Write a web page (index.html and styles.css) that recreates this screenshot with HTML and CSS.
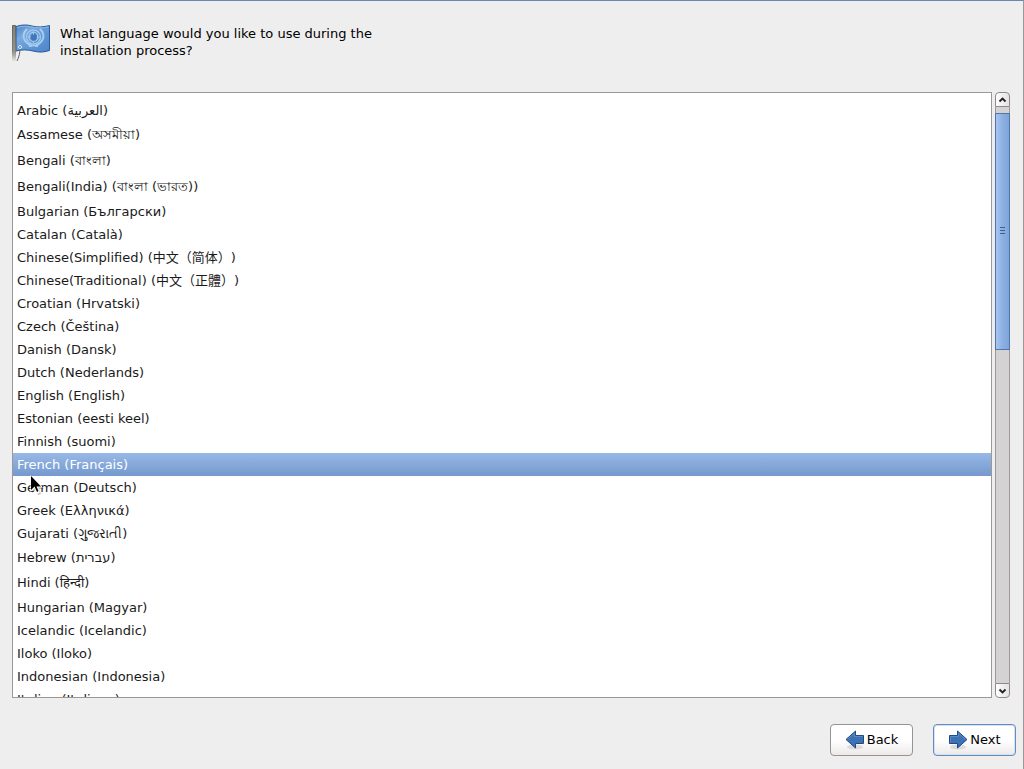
FILE: index.html
```html
<!DOCTYPE html>
<html lang="en">
<head>
    <meta charset="UTF-8">
    <meta name="viewport" content="width=device-width, initial-scale=1.0">
    <title>Installer - Language</title>
    <link rel="stylesheet" href="styles.css">
</head>
<body>
    <form class="installer">
        <header class="header">
            <svg class="flag" width="40" height="40" viewBox="0 0 40 40" aria-hidden="true">
                <defs>
                    <linearGradient id="cloth" x1="0" y1="0" x2="1" y2="1">
                        <stop offset="0" stop-color="#4a83c8"/>
                        <stop offset="0.3" stop-color="#7aaade"/>
                        <stop offset="0.65" stop-color="#5b93d3"/>
                        <stop offset="1" stop-color="#4e86c8"/>
                    </linearGradient>
                    <linearGradient id="pole" x1="0" y1="0" x2="0" y2="1">
                        <stop offset="0" stop-color="#60625c"/>
                        <stop offset="0.7" stop-color="#7c7e77"/>
                        <stop offset="1" stop-color="#888a85" stop-opacity="0"/>
                    </linearGradient>
                </defs>
                <path d="M4 2.500C10 .5 15 .5 20 2s12 1 17.500-.5v25C31 28.500 27 28.500 21 27S10 25.500 4 27z" fill="url(#cloth)" stroke="#2c5a9c"/>
                <path d="M5 3.500C10 2 15 2 20 3s11 1 16.500 0" fill="none" stroke="#8db5e4"/>
                <g fill="none" stroke="#a9cdf0">
                    <circle cx="21.500" cy="13" r="7" stroke-width="1.200"/>
                    <circle cx="21.500" cy="13" r="4.500" fill="#6ca0da" stroke-width="1.200"/>
                    <path d="M20 10l3-1 2 3-1 4-3 1-3-3z" fill="#3f78b9" stroke="none"/>
                    <path d="M21.500 7v4M16 13h3M25 13h3M21.500 17v3" stroke-width=".8"/>
                    <path d="M15 5c-6 6-4 13 5 17M28 5c6 6 4 13-5 17" stroke-width="2"/>
                    <path d="M17 22.500c3-1.500 6-1.500 9 0" stroke-width="1.500"/>
                </g>
                <rect x="0" y="1" width="4" height="37" rx="1" fill="url(#pole)"/>
                <path d="M2 2v28" stroke="#a5a79f"/>
                <path d="M8 24c0 5-1 9-3 13" fill="none" stroke="#666"/>
                <circle cx="8" cy="23" r="1.500" fill="#5588c6" stroke="#e5edf5"/>
            </svg>
            <h1 class="question" id="question">What language would you like to use during the installation process?</h1>
        </header>

        <main class="picker">
            <div class="viewport">
                <div class="languages" role="radiogroup" aria-labelledby="question">
                    <label class="language"><input type="radio" name="lang">Afrikaans (Afrikaans)</label>
                    <label class="language"><input type="radio" name="lang">Arabic (العربية)</label>
                    <label class="language tall"><input type="radio" name="lang">Assamese (<span lang="as">অসমীয়া</span>)</label>
                    <label class="language tall"><input type="radio" name="lang">Bengali (<span lang="bn">বাংলা</span>)</label>
                    <label class="language tall"><input type="radio" name="lang">Bengali(India) (<span lang="bn">বাংলা (ভারত)</span>)</label>
                    <label class="language"><input type="radio" name="lang">Bulgarian (Български)</label>
                    <label class="language"><input type="radio" name="lang">Catalan (Català)</label>
                    <label class="language"><input type="radio" name="lang">Chinese(Simplified) (<span class="cjk" lang="zh-CN">中文（简体）</span>)</label>
                    <label class="language"><input type="radio" name="lang">Chinese(Traditional) (<span class="cjk" lang="zh-TW">中文（正體）</span>)</label>
                    <label class="language"><input type="radio" name="lang">Croatian (Hrvatski)</label>
                    <label class="language"><input type="radio" name="lang">Czech (Čeština)</label>
                    <label class="language"><input type="radio" name="lang">Danish (Dansk)</label>
                    <label class="language"><input type="radio" name="lang">Dutch (Nederlands)</label>
                    <label class="language"><input type="radio" name="lang">English (English)</label>
                    <label class="language"><input type="radio" name="lang">Estonian (eesti keel)</label>
                    <label class="language"><input type="radio" name="lang">Finnish (suomi)</label>
                    <label class="language"><input type="radio" name="lang" checked>French (Français)</label>
                    <label class="language"><input type="radio" name="lang">German (Deutsch)</label>
                    <label class="language"><input type="radio" name="lang">Greek (Ελληνικά)</label>
                    <label class="language medium"><input type="radio" name="lang">Gujarati (<span lang="gu">ગુજરાતી</span>)</label>
                    <label class="language medium"><input type="radio" name="lang">Hebrew (עברית)</label>
                    <label class="language tall"><input type="radio" name="lang">Hindi (<span lang="hi">हिन्दी</span>)</label>
                    <label class="language"><input type="radio" name="lang">Hungarian (Magyar)</label>
                    <label class="language"><input type="radio" name="lang">Icelandic (Icelandic)</label>
                    <label class="language"><input type="radio" name="lang">Iloko (Iloko)</label>
                    <label class="language"><input type="radio" name="lang">Indonesian (Indonesia)</label>
                    <label class="language"><input type="radio" name="lang">Italian (Italiano)</label>
                </div>
                <svg class="pointer" width="14" height="22" viewBox="0 0 14 22" aria-hidden="true">
                    <path d="M2 2v16l3.500-3 2.500 5 3-1-2-5h5z" fill="#000" opacity=".25"/>
                    <path d="M.5 0v17l4-3.500 2.500 5.500 3-1.500-2-5h5z" fill="#fff"/>
                    <path d="M1 1v14l3.500-3.500L7 17l1.500-1-2-4.500H11z" fill="#000"/>
                </svg>
            </div>

            <div class="scrollbar">
                <button type="button" class="stepper up" aria-label="Scroll up">
                    <svg width="9" height="6" viewBox="0 0 9 6"><path d="M1.500 4.500l3-3 3 3" fill="none" stroke="#222" stroke-width="1.800"/></svg>
                </button>
                <div class="track">
                    <div class="thumb"><span class="grip"></span></div>
                </div>
                <button type="button" class="stepper down" aria-label="Scroll down">
                    <svg width="9" height="6" viewBox="0 0 9 6"><path d="M1.500 1.500l3 3 3-3" fill="none" stroke="#222" stroke-width="1.800"/></svg>
                </button>
            </div>
        </main>

        <footer class="actions">
            <button type="button" class="btn">
                <svg width="20" height="20" viewBox="0 0 20 20" aria-hidden="true">
                    <ellipse cx="10" cy="17" rx="8" ry="2.500" fill="#000" opacity=".1"/>
                    <path d="M1 9.500L10.500 1v4.500h8v8h-8V18z" fill="#3c72b4" stroke="#204a87"/>
                    <path d="M2.500 9.500l7-6.300v3.300h8" fill="none" stroke="#5a8ac4"/>
                </svg>
                Back
            </button>
            <button type="submit" class="btn default">
                <svg width="20" height="20" viewBox="0 0 20 20" aria-hidden="true">
                    <ellipse cx="10" cy="17" rx="8" ry="2.500" fill="#000" opacity=".1"/>
                    <path d="M19 9.500L9.500 1v4.500h-8v8h8V18z" fill="#3c72b4" stroke="#204a87"/>
                    <path d="M2.500 12.500v-6h8V3.200l7 6.300" fill="none" stroke="#5a8ac4"/>
                </svg>
                Next
            </button>
        </footer>
    </form>
</body>
</html>
```
FILE: styles.css
```css
* {
    margin: 0;
    padding: 0;
    box-sizing: border-box;
}

body {
    font-family: "DejaVu Sans", "Noto Sans", sans-serif;
    font-size: 13px;
    color: #1a1a1a;
    background: #eee;
}

.installer {
    display: flex;
    flex-direction: column;
    height: 100vh;
    border-top: 1px solid #6b85ad;
    border-right: 1px solid #9d9896;
}

/* Header */
.header {
    display: flex;
    gap: 8px;
    padding: 23px 12px 28px;
}

.flag {
    flex: none;
}

.question {
    max-width: 340px;
    padding-top: 1px;
    font-size: 13px;
    font-weight: normal;
    line-height: 17px;
    color: #000;
}

/* Language list */
.picker {
    flex: 1;
    display: flex;
    gap: 3px;
    min-height: 0;
    padding: 0 13px 0 12px;
}

.viewport {
    position: relative;
    flex: 1;
    overflow: hidden;
    background: #fff;
    border: 1px solid #9d9896;
}

/* scrolled a little past the first row */
.languages {
    margin-top: -17px;
}

.language {
    display: block;
    height: 23px;
    padding-left: 4px;
    line-height: 24px;
    white-space: nowrap;
}

.language.medium {
    height: 24px;
}

.language.tall {
    height: 26px;
    line-height: 26px;
}

/* keeps the fallback fonts from pushing the baseline down */
.language span {
    line-height: 1;
}

.language input {
    position: absolute;
    opacity: 0;
}

.language:has(input:checked) {
    color: #fff;
    background: linear-gradient(#98b9e7, #7499cd);
}

.cjk {
    font-family: "Noto Sans CJK SC", sans-serif;
    text-spacing-trim: space-all;
}

.cjk:lang(zh-TW) {
    font-family: "Noto Sans CJK TC", sans-serif;
}

.pointer {
    position: absolute;
    left: 17px;
    top: 382px;
}

/* Scrollbar */
.scrollbar {
    display: flex;
    flex-direction: column;
    width: 15px;
}

.stepper {
    display: flex;
    align-items: center;
    justify-content: center;
    height: 15px;
    border: 1px solid #8f8a88;
    background: linear-gradient(90deg, #fff, #e4e2e2);
}

.up {
    border-radius: 4px 4px 0 0;
}

.down {
    border-radius: 0 0 4px 4px;
}

.track {
    flex: 1;
    padding-top: 6px;
    border: solid #9d9896;
    border-width: 0 1px;
    background: #d4d2d2;
}

.thumb {
    display: flex;
    align-items: center;
    justify-content: center;
    height: 41.5%;
    margin: 0 -1px;
    padding-bottom: 2px;
    border: 1px solid #4f75ab;
    background: linear-gradient(90deg, #a9c5f0, #8db0e2 50%, #7ea4d9);
}

.grip {
    width: 5px;
    height: 7px;
    background: repeating-linear-gradient(#3d618f 0 1px, transparent 1px 3px);
}

/* Buttons */
.actions {
    display: flex;
    justify-content: flex-end;
    gap: 20px;
    padding: 26px 7px 13px;
}

.btn {
    display: flex;
    align-items: center;
    justify-content: center;
    gap: 2px;
    width: 83px;
    height: 32px;
    padding-bottom: 1px;
    font: inherit;
    color: #000;
    background: linear-gradient(#fff 50%, #ede9e9);
    border: 1px solid #989290;
    border-radius: 4px;
}

.btn.default {
    border-color: #668bbd;
    box-shadow: inset 0 0 0 1px #d3e1f4;
}
```
